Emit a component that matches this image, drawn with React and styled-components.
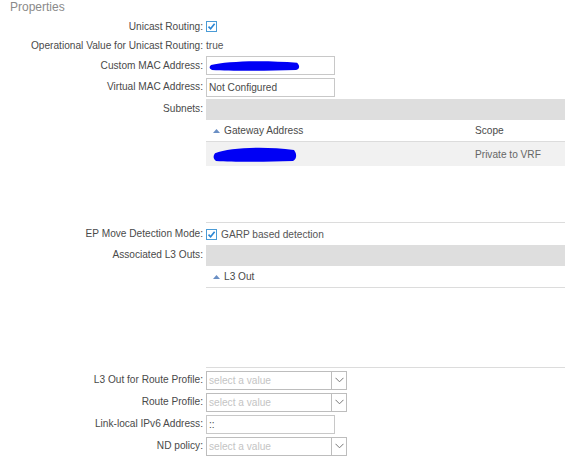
import React from 'react'
import styled, {createGlobalStyle} from 'styled-components'

const GlobalStyle = createGlobalStyle`
    html, body {
        margin: 0;
        padding: 0;
        background: #fff;
    }
    body {
        font-family: "Liberation Sans", Arial, sans-serif;
        font-size: 10.15px;
        color: #555;
    }
`

const Check = () => (
    <CheckBox>
        <svg width="11" height="11" viewBox="0 0 11 11">
            <rect x="0.5" y="0.5" width="10" height="10" fill="#fff" stroke="#4a9bd6" />
            <path d="M2.5 5.6 L4.6 7.8 L8.6 2.8" fill="none" stroke="#2a86d4" strokeWidth="1.6" />
        </svg>
    </CheckBox>
)

const Chevron = () => (
    <svg width="9" height="6" viewBox="0 0 9 6">
        <path d="M0.5 0.8 L4.5 4.8 L8.5 0.8" fill="none" stroke="#777" strokeWidth="1" />
    </svg>
)

const SortUp = () => (
    <SortIcon>
        <svg width="7" height="4" viewBox="0 0 7 4">
            <path d="M0 4 L3.5 0 L7 4 Z" fill="#6a8fc4" />
        </svg>
    </SortIcon>
)

const Scribble = ({width, height}) => (
    <svg width={width} height={height} viewBox={`0 0 ${width} ${height}`}>
        <path
            d={`M2 ${height * 0.45} C ${width * 0.2} ${height * 0.1}, ${width * 0.6} 0, ${width - 3} ${height * 0.25}
               C ${width} ${height * 0.5}, ${width} ${height * 0.8}, ${width - 4} ${height - 1}
               C ${width * 0.6} ${height}, ${width * 0.25} ${height}, 3 ${height - 1}
               C 0 ${height * 0.8}, 0 ${height * 0.6}, 2 ${height * 0.45} Z`}
            fill="#0000f5"
        />
    </svg>
)

const SelectBox = ({placeholder}) => (
    <Select>
        <SelectText>{placeholder}</SelectText>
        <SelectArrow><Chevron /></SelectArrow>
    </Select>
)

export default function App() {
    return (
        <Page>
            <GlobalStyle />
            <Title>Properties</Title>
            <Form>
                <Row $h={19}>
                    <Label>Unicast Routing:</Label>
                    <Value><Check /></Value>
                </Row>
                <Row $h={19}>
                    <Label>Operational Value for Unicast Routing:</Label>
                    <Value>true</Value>
                </Row>
                <Row $h={21}>
                    <Label>Custom MAC Address:</Label>
                    <Value>
                        <Input><Scribble width={91} height={11} /></Input>
                    </Value>
                </Row>
                <Row $h={22}>
                    <Label>Virtual MAC Address:</Label>
                    <Value>
                        <Input>Not Configured</Input>
                    </Value>
                </Row>

                <TableRow $mt={1}>
                    <Label $top>Subnets:</Label>
                    <Table $height={123}>
                        <Toolbar />
                        <HeadRow>
                            <HeadCell $w={262}><SortUp />Gateway Address</HeadCell>
                            <HeadCell>Scope</HeadCell>
                        </HeadRow>
                        <DataRow>
                            <Cell $w={262}><Scribble width={84} height={16} /></Cell>
                            <Cell>Private to VRF</Cell>
                        </DataRow>
                    </Table>
                </TableRow>

                <Row $h={22}>
                    <Label>EP Move Detection Mode:</Label>
                    <Value><Check /><CheckLabel>GARP based detection</CheckLabel></Value>
                </Row>

                <TableRow>
                    <Label $top>Associated L3 Outs:</Label>
                    <Table $height={122}>
                        <Toolbar />
                        <HeadRow $h={21}>
                            <HeadCell><SortUp />L3 Out</HeadCell>
                        </HeadRow>
                    </Table>
                </TableRow>

                <Spacer />

                <Row $h={22}>
                    <Label>L3 Out for Route Profile:</Label>
                    <Value><SelectBox placeholder="select a value" /></Value>
                </Row>
                <Row $h={22}>
                    <Label>Route Profile:</Label>
                    <Value><SelectBox placeholder="select a value" /></Value>
                </Row>
                <Row $h={22}>
                    <Label>Link-local IPv6 Address:</Label>
                    <Value><Input>::</Input></Value>
                </Row>
                <Row $h={22}>
                    <Label>ND policy:</Label>
                    <Value><SelectBox placeholder="select a value" /></Value>
                </Row>
            </Form>
        </Page>
    )
}

const Page = styled.div`
    width: 565px;
    height: 470px;
    overflow: hidden;
    background: #fff;
`

const Title = styled.div`
    height: 17px;
    padding-left: 10px;
    font-size: 12px;
    line-height: 15px;
    color: #8a8a8a;
`

const Form = styled.div`
    display: flex;
    flex-direction: column;
`

const Row = styled.div`
    display: grid;
    grid-template-columns: 203px 1fr;
    column-gap: 3px;
    align-items: center;
    height: ${({$h}) => $h}px;
`

const TableRow = styled.div`
    display: grid;
    grid-template-columns: 203px 1fr;
    column-gap: 3px;
    margin-top: ${({$mt}) => $mt || 0}px;
`

const Label = styled.div`
    text-align: right;
    color: #4a4a4a;
    white-space: nowrap;
    padding-top: ${({$top}) => $top ? '4px' : '0'};
    line-height: 12px;
`

const Value = styled.div`
    display: flex;
    align-items: center;
    color: #555;
`

const CheckBox = styled.span`
    display: inline-flex;
    width: 11px;
    height: 11px;
`

const CheckLabel = styled.span`
    margin-left: 4px;
    color: #555;
`

const Input = styled.div`
    box-sizing: border-box;
    width: 129px;
    height: 19px;
    border: 1px solid #c8c8c8;
    display: flex;
    align-items: center;
    padding-left: 2px;
    color: #4a4a4a;
`

const Select = styled.div`
    box-sizing: border-box;
    width: 141px;
    height: 19px;
    border: 1px solid #bdbdbd;
    display: flex;
    align-items: center;
`

const SelectText = styled.div`
    flex: 1;
    padding-left: 2px;
    color: #c4c4c4;
`

const SelectArrow = styled.div`
    width: 14px;
    height: 100%;
    border-left: 1px solid #bdbdbd;
    display: flex;
    align-items: center;
    justify-content: center;
`

const Table = styled.div`
    display: flex;
    flex-direction: column;
    height: ${({$height}) => $height}px;
    border-bottom: 1px solid #dcdcdc;
`

const Toolbar = styled.div`
    height: 21px;
    background: #dedede;
`

const HeadRow = styled.div`
    display: flex;
    align-items: center;
    height: ${({$h}) => $h || 21}px;
    border-bottom: 1px solid #dcdcdc;
    color: #4a4a4a;
`

const HeadCell = styled.div`
    width: ${({$w}) => $w ? `${$w}px` : 'auto'};
    flex: ${({$w}) => $w ? 'none' : '1'};
    display: flex;
    align-items: center;
    padding-left: 7px;
    box-sizing: border-box;
`

const SortIcon = styled.span`
    display: inline-flex;
    margin-right: 4px;
`

const DataRow = styled.div`
    display: flex;
    align-items: center;
    height: 24px;
    background: #f1f1f1;
    color: #666;
`

const Cell = styled.div`
    width: ${({$w}) => $w ? `${$w}px` : 'auto'};
    flex: ${({$w}) => $w ? 'none' : '1'};
    display: flex;
    align-items: center;
    padding-left: 7px;
    box-sizing: border-box;
`

const Spacer = styled.div`
    height: 1px;
`
